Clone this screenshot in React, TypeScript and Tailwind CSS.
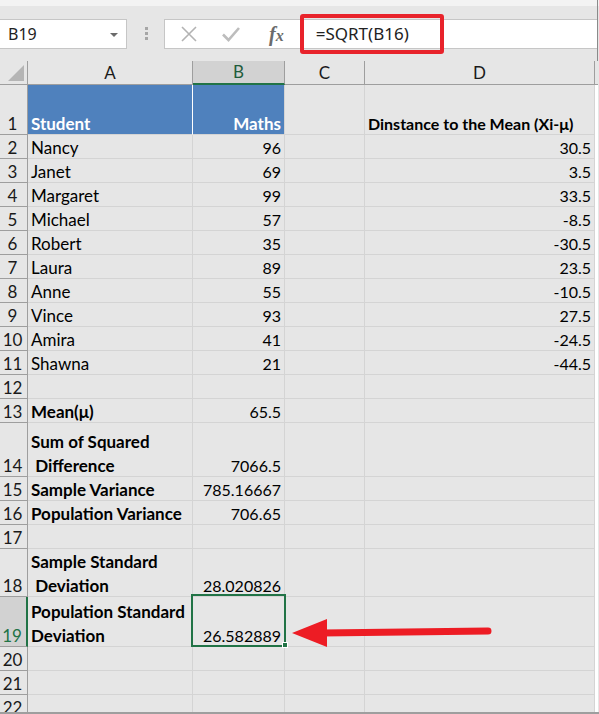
import React from 'react'

type Row = {
  n: number
  h?: number
  a?: string[]
  b?: string
  d?: string
  bold?: boolean
  head?: boolean
}

const rows: Row[] = [
  { n: 1, h: 50, a: ['Student'], b: 'Maths', d: 'Dinstance to the Mean (Xi-μ)', head: true },
  { n: 2, a: ['Nancy'], b: '96', d: '30.5' },
  { n: 3, a: ['Janet'], b: '69', d: '3.5' },
  { n: 4, a: ['Margaret'], b: '99', d: '33.5' },
  { n: 5, a: ['Michael'], b: '57', d: '-8.5' },
  { n: 6, a: ['Robert'], b: '35', d: '-30.5' },
  { n: 7, a: ['Laura'], b: '89', d: '23.5' },
  { n: 8, a: ['Anne'], b: '55', d: '-10.5' },
  { n: 9, a: ['Vince'], b: '93', d: '27.5' },
  { n: 10, a: ['Amira'], b: '41', d: '-24.5' },
  { n: 11, a: ['Shawna'], b: '21', d: '-44.5' },
  { n: 12 },
  { n: 13, a: ['Mean(μ)'], b: '65.5', bold: true },
  { n: 14, h: 54, a: ['Sum of Squared', ' Difference'], b: '7066.5', bold: true },
  { n: 15, a: ['Sample Variance'], b: '785.16667', bold: true },
  { n: 16, a: ['Population Variance'], b: '706.65', bold: true },
  { n: 17 },
  { n: 18, h: 48, a: ['Sample Standard', ' Deviation'], b: '28.020826', bold: true },
  { n: 19, h: 50, a: ['Population Standard', 'Deviation'], b: '26.582889', bold: true },
  { n: 20 },
  { n: 21 },
  { n: 22 },
]

const cellFont = { fontFamily: 'Lato, "Liberation Sans", sans-serif' }

// bottom-aligned cell text; the last line sits a little low, like Excel's
function Lines({ lines, className }: { lines?: string[]; className?: string }) {
  const list = lines ?? []
  return (
    <div className={`flex h-full flex-col justify-end whitespace-pre ${className ?? ''}`}>
      {list.map((l, i) => (
        <div key={i} className={i === list.length - 1 ? 'leading-[20px]' : 'leading-[28px]'}>
          {l}
        </div>
      ))}
    </div>
  )
}

function SheetRow({ r }: { r: Row }) {
  const selected = r.n === 19
  return (
    <div className="flex" style={{ height: r.h ?? 24 }}>
      <div
        className={`w-[28px] shrink-0 border-b border-r box-border ${
          selected
            ? 'bg-[#d2d2d2] text-[#217346] border-r-2 border-r-[#217346] border-b-[#9e9e9e]'
            : 'bg-[#e6e6e6] text-[#1a1a1a] border-[#9e9e9e]'
        }`}
      >
        <Lines lines={[String(r.n)]} className="items-center pr-[2px] text-[17px]" />
      </div>
      <div
        className={`w-[165px] shrink-0 border-b border-r box-border pl-[3px] text-[17px] ${
          r.head ? 'bg-[#4f81bd] text-white font-bold border-r-white border-b-[#d4d4d4]' : 'border-[#d4d4d4] text-black'
        } ${r.bold ? 'font-bold' : ''}`}
      >
        <Lines lines={r.a} />
      </div>
      <div
        className={`w-[92px] shrink-0 border-b border-r box-border pr-[3px] text-right ${
          r.head ? 'bg-[#4f81bd] text-white font-bold text-[17px]' : 'text-black text-[16px]'
        } border-[#d4d4d4]`}
      >
        <Lines lines={r.b ? [r.b] : []} className="items-end" />
      </div>
      <div className="w-[80px] shrink-0 border-b border-r border-[#d4d4d4] box-border" />
      <div
        className={`w-[230px] shrink-0 border-b border-r border-[#d4d4d4] box-border px-[3px] text-black text-[16px] ${
          r.head ? 'font-bold text-left' : 'text-right'
        }`}
      >
        <Lines lines={r.d ? [r.d] : []} className={r.head ? 'items-start' : 'items-end'} />
      </div>
      <div className="w-[3px] shrink-0 bg-white" />
    </div>
  )
}

function FormulaBar() {
  return (
    <div className="flex h-[42px] items-start pt-[13px]" style={{ fontFamily: '"Noto Sans", "Open Sans", sans-serif' }}>
      <div className="relative flex h-[30px] w-[127px] shrink-0 items-center border border-l-0 border-[#c6c6c6] bg-white pl-[8px] text-[16px] text-[#222]">
        B19
        <div className="absolute right-[8px] top-[13px] h-0 w-0 border-l-[4px] border-r-[4px] border-t-[4px] border-l-transparent border-r-transparent border-t-[#6b6b6b]" />
      </div>
      <div className="flex w-[37px] shrink-0 flex-col items-center gap-[2px] pt-[8px] pl-[1px]">
        <div className="h-[3px] w-[3px] bg-[#a6a6a6]" />
        <div className="h-[3px] w-[3px] bg-[#a6a6a6]" />
        <div className="h-[3px] w-[3px] bg-[#a6a6a6]" />
      </div>
      <div className="flex h-[30px] flex-1 items-center border border-r-0 border-[#c6c6c6] bg-white">
        <svg width="16" height="16" viewBox="0 0 16 16" className="ml-[16px]">
          <path d="M1 1 L15 15 M15 1 L1 15" stroke="#b3b3b3" strokeWidth="1.6" fill="none" />
        </svg>
        <svg width="18" height="16" viewBox="0 0 18 16" className="ml-[25px]">
          <path d="M1 8.5 L6.5 14 L17 2" stroke="#bdbdbd" strokeWidth="2.6" fill="none" />
        </svg>
        <span
          className="ml-[29px] text-[20px] font-bold italic text-[#6b6b6b]"
          style={{ fontFamily: '"Liberation Serif", "DejaVu Serif", serif' }}
        >
          f<span className="text-[16px]">x</span>
        </span>
        <span className="ml-[32px] text-[17px] text-[#222]">=SQRT(B16)</span>
      </div>
    </div>
  )
}

function ColumnHeaders() {
  const cols = [
    { l: 'A', w: 'w-[165px]' },
    { l: 'B', w: 'w-[92px]', sel: true },
    { l: 'C', w: 'w-[80px]' },
    { l: 'D', w: 'w-[230px]' },
  ]
  return (
    <div className="flex h-[24px]" style={cellFont}>
      <div className="relative w-[28px] shrink-0 border-b border-r border-[#9e9e9e] bg-[#e6e6e6] box-border">
        <svg width="28" height="23" viewBox="0 0 28 23" className="absolute left-0 top-0">
          <polygon points="8,20 24,20 24,4" fill="#b5b5b5" />
        </svg>
      </div>
      {cols.map((c) => (
        <div
          key={c.l}
          className={`${c.w} shrink-0 box-border flex items-center justify-center border-r text-[17px] ${
            c.sel
              ? 'bg-[#d2d2d2] text-[#1f5c3b] border-b-2 border-b-[#217346] border-r-[#9e9e9e]'
              : 'bg-[#e6e6e6] text-[#1a1a1a] border-b border-[#9e9e9e]'
          }`}
        >
          {c.l}
        </div>
      ))}
      <div className="w-[3px] shrink-0 border-b border-[#9e9e9e] bg-[#e6e6e6]" />
    </div>
  )
}

export default function App() {
  return (
    <div className="relative h-[714px] w-[599px] overflow-hidden bg-[#e6e6e6]">
      <div className="h-[6px] bg-[#f3f3f3]" />
      <div className="mr-[1px] border-r border-[#8a8a8a]">
        <div className="-mt-[6px]">
          <div className="h-[6px] bg-[#f3f3f3]" />
          <FormulaBar />
          <div className="h-[13px]" />
        </div>
        <ColumnHeaders />
        <div style={cellFont}>
          {rows.map((r) => (
            <SheetRow key={r.n} r={r} />
          ))}
        </div>
      </div>

      {/* red highlight round the formula */}
      <div className="absolute left-[300px] top-[14px] h-[40px] w-[144px] rounded-[3px] border-[4px] border-[#e8232b]" />

      {/* selected cell */}
      <div className="absolute left-[191px] top-[594px] h-[53px] w-[95px] border-2 border-[#217346]" />
      <div className="absolute left-[282px] top-[642px] h-[6px] w-[6px] border border-white bg-[#217346]" />

      {/* arrow */}
      <svg className="absolute left-0 top-0" width="599" height="714" viewBox="0 0 599 714">
        <line x1="322" y1="633" x2="488" y2="631" stroke="#ed1c24" strokeWidth="7" strokeLinecap="round" />
        <polygon points="292,633 327,619 327,647" fill="#ed1c24" />
      </svg>

      <div className="absolute bottom-0 left-0 h-[2px] w-full bg-[#9e9e9e]" />
    </div>
  )
}
